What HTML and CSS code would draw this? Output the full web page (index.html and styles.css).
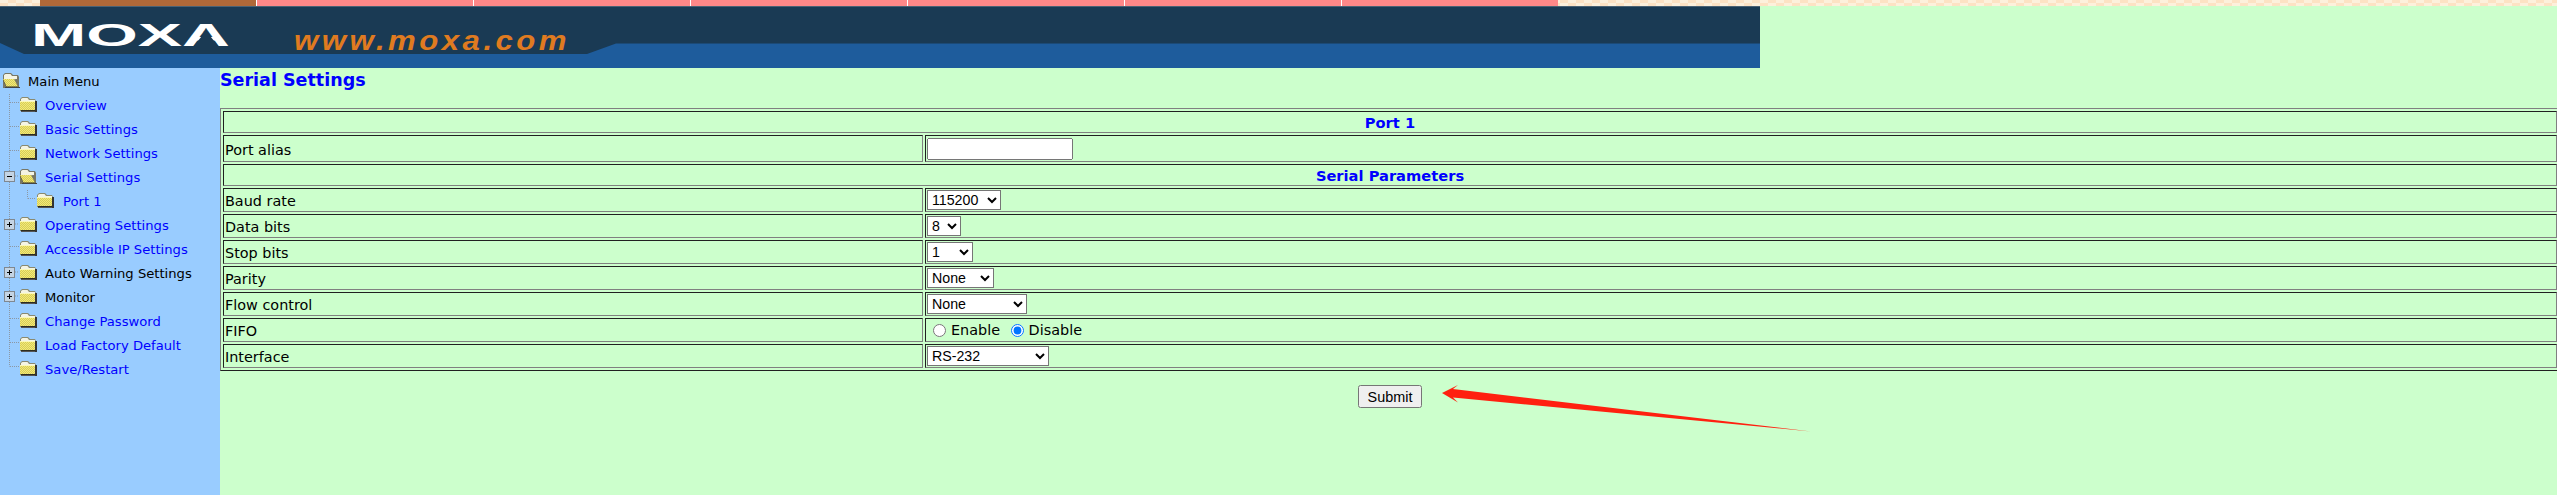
FILE: index.html
```html
<!DOCTYPE html>
<html lang="en">
<head>
<meta charset="utf-8">
<title>Serial Settings</title>
<link rel="stylesheet" href="styles.css">
</head>
<body>
<svg class="defs" width="0" height="0" aria-hidden="true">
  <defs>
    <pattern id="dither" width="2" height="2" patternUnits="userSpaceOnUse">
      <rect width="2" height="2" fill="#f2ea78"/>
      <rect width="1" height="1" fill="#d8cc58"/>
      <rect x="1" y="1" width="1" height="1" fill="#d8cc58"/>
    </pattern>
    <symbol id="closed" viewBox="0 0 18 24">
      <path d="M1 7V5l2-2h6l2 2h5l1 2v10H1z" fill="#8a8a70"/>
      <path d="M2 7V5l1.500-1h5L10 6h6v1z" fill="#f4f4e4"/>
      <rect x="2" y="7" width="15" height="10" fill="#2c2c20"/>
      <rect x="1" y="7" width="15" height="9" fill="url(#dither)"/>
      <rect x="1" y="7" width="15" height="1" fill="#fbf8b8"/>
      <rect x="2" y="17" width="16" height="1" fill="#555"/>
      <rect x="16" y="7" width="2" height="11" fill="#333"/>
    </symbol>
    <symbol id="open" viewBox="0 0 18 24">
      <path d="M1 7V5l2-2h6l2 2h5l1 2v11H1z" fill="#777766"/>
      <path d="M2 10V5l1.500-1h5L10 6h5v3z" fill="#f4f4e4"/>
      <path d="M1 10h11l5 8H5z" fill="#2c2c20"/>
      <path d="M1 9h11l4 7.500H4.500z" fill="url(#dither)"/>
      <rect x="3" y="17" width="15" height="1" fill="#444"/>
    </symbol>
    <symbol id="tee" viewBox="0 0 19 24">
      <path d="M9.500 0v24M10 8.500h9" class="dots"/>
    </symbol>
    <symbol id="end" viewBox="0 0 19 24">
      <path d="M9.500 0v8.500M10 8.500h9" class="dots"/>
    </symbol>
    <symbol id="minus" viewBox="0 0 19 24">
      <path d="M9.500 0v24M15 10h4" class="dots"/>
      <rect x="4.500" y="5.500" width="10" height="10" fill="#c4d4e4" stroke="#808890"/>
      <path d="M7 10.500h5" stroke="#000"/>
    </symbol>
    <symbol id="plus" viewBox="0 0 19 24">
      <path d="M9.500 0v24M15 10h4" class="dots"/>
      <rect x="4.500" y="5.500" width="10" height="10" fill="#c4d4e4" stroke="#808890"/>
      <path d="M7 10.500h5M9.500 8v5" stroke="#000"/>
    </symbol>
    <symbol id="sub" viewBox="0 0 36 24">
      <path d="M9.500 0v24M27.500 0v8.500M28 8.500h8" class="dots"/>
    </symbol>
  </defs>
</svg>

<div class="tabs">
  <div class="tab tab-active"></div>
  <div class="tab"></div>
  <div class="tab"></div>
  <div class="tab"></div>
  <div class="tab"></div>
  <div class="tab"></div>
  <div class="tab"></div>
</div>

<header class="banner">
  <svg class="banner-art" width="1760" height="62" viewBox="0 0 1760 62" role="img" aria-label="MOXA www.moxa.com">
    <path d="M0 0H1760V37.500H616L587 48H24L0 37z" fill="#1a3a54"/>
    <rect width="1760" height="1" fill="#4a6274"/>
    <rect y="37" x="616" width="1144" height="1" fill="#1c4a76"/>
    <text x="31" y="40" class="logo" textLength="199" lengthAdjust="spacingAndGlyphs">MOXA</text>
    <path d="M193 41L206 25L219 41z" fill="#1a3a54"/>
    <text x="294" y="44" class="url" textLength="276" lengthAdjust="spacingAndGlyphs">www.moxa.com</text>
  </svg>
</header>

<div class="main">
  <nav class="side">
    <div class="row"><svg class="ico-main"><use href="#open"/></svg><span class="label main-label">Main Menu</span></div>
    <a class="row" href="#"><svg class="twig"><use href="#tee"/></svg><svg class="ico"><use href="#closed"/></svg><span class="label">Overview</span></a>
    <a class="row" href="#"><svg class="twig"><use href="#tee"/></svg><svg class="ico"><use href="#closed"/></svg><span class="label">Basic Settings</span></a>
    <a class="row" href="#"><svg class="twig"><use href="#tee"/></svg><svg class="ico"><use href="#closed"/></svg><span class="label">Network Settings</span></a>
    <a class="row" href="#"><svg class="twig"><use href="#minus"/></svg><svg class="ico"><use href="#open"/></svg><span class="label">Serial Settings</span></a>
    <a class="row" href="#"><svg class="twig-sub"><use href="#sub"/></svg><svg class="ico"><use href="#closed"/></svg><span class="label label-sub">Port 1</span></a>
    <a class="row" href="#"><svg class="twig"><use href="#plus"/></svg><svg class="ico"><use href="#closed"/></svg><span class="label">Operating Settings</span></a>
    <a class="row" href="#"><svg class="twig"><use href="#tee"/></svg><svg class="ico"><use href="#closed"/></svg><span class="label">Accessible IP Settings</span></a>
    <div class="row"><svg class="twig"><use href="#plus"/></svg><svg class="ico"><use href="#closed"/></svg><span class="label dark">Auto Warning Settings</span></div>
    <div class="row"><svg class="twig"><use href="#plus"/></svg><svg class="ico"><use href="#closed"/></svg><span class="label dark">Monitor</span></div>
    <a class="row" href="#"><svg class="twig"><use href="#tee"/></svg><svg class="ico"><use href="#closed"/></svg><span class="label">Change Password</span></a>
    <a class="row" href="#"><svg class="twig"><use href="#tee"/></svg><svg class="ico"><use href="#closed"/></svg><span class="label">Load Factory Default</span></a>
    <a class="row" href="#"><svg class="twig"><use href="#end"/></svg><svg class="ico"><use href="#closed"/></svg><span class="label">Save/Restart</span></a>
  </nav>

  <main class="content">
    <h2 class="title">Serial Settings</h2>
    <form class="form">
      <table class="grid">
        <colgroup><col class="col-a"><col></colgroup>
        <tr class="head"><th colspan="2">Port 1</th></tr>
        <tr class="tall"><td>Port alias</td><td><input class="alias" type="text"></td></tr>
        <tr class="head"><th colspan="2">Serial Parameters</th></tr>
        <tr><td>Baud rate</td><td><select class="s-baud"><option>115200</option></select></td></tr>
        <tr><td>Data bits</td><td><select class="s-data"><option>8</option></select></td></tr>
        <tr><td>Stop bits</td><td><select class="s-stop"><option>1</option></select></td></tr>
        <tr><td>Parity</td><td><select class="s-parity"><option>None</option></select></td></tr>
        <tr><td>Flow control</td><td><select class="s-flow"><option>None</option></select></td></tr>
        <tr><td>FIFO</td><td class="radios">
          <label class="radio"><input type="radio" name="fifo">Enable</label>
          <label class="radio"><input type="radio" name="fifo" checked>Disable</label>
        </td></tr>
        <tr><td>Interface</td><td><select class="s-if"><option>RS-232</option></select></td></tr>
      </table>
      <div class="actions"><button class="submit" type="button">Submit</button></div>
    </form>
  </main>
</div>

<svg class="arrow" width="372" height="50" viewBox="1442 384 372 50" aria-hidden="true">
  <path d="M1442 393L1458 385L1453 389L1811 431.500L1453 397.500L1458 402.500z" fill="#ff2010"/>
</svg>
</body>
</html>
```

FILE: styles.css
```css
html, body {
  margin: 0;
  height: 495px;
  overflow: hidden;
  background: #ccffcc;
}

body {
  position: relative;
  font-family: "DejaVu Sans", Verdana, sans-serif;
  font-size: 13.15px;
  color: #000;
}

.defs {
  position: absolute;
}

.dots {
  fill: none;
  stroke: #8c97a3;
  stroke-dasharray: 1 1;
}

.tabs {
  display: flex;
  height: 6px;
  padding-left: 40px;
  background: repeating-conic-gradient(#fde2c4 0 25%, #fdf0dc 0 50%) 0 0 / 16px 6px;
}

.tab {
  width: 216px;
  background: #ff8888;
  border-right: 1px solid #fff;
}

.tab:last-child {
  border-right: 0;
}

.tab-active {
  background: #b06838;
}

.banner {
  width: 1760px;
  height: 62px;
  background: #1e5c9c;
}

.banner-art {
  display: block;
}

.logo {
  font-family: "Liberation Sans", Arial, sans-serif;
  font-weight: 700;
  font-size: 32px;
  fill: #fff;
}

.url {
  font-family: "Liberation Sans", Arial, sans-serif;
  font-style: italic;
  font-weight: 700;
  font-size: 27px;
  letter-spacing: 3px;
  fill: #e07b20;
}

.main {
  display: flex;
  height: 427px;
}

.side {
  flex: none;
  box-sizing: border-box;
  width: 220px;
  padding-top: 2px;
  background: #99ccff;
}

.row {
  display: flex;
  height: 24px;
  align-items: center;
  color: #0000ff;
  text-decoration: none;
}

.twig {
  flex: none;
  width: 19px;
  height: 24px;
}

.twig-sub {
  flex: none;
  width: 36px;
  height: 24px;
}

.ico {
  flex: none;
  width: 18px;
  height: 24px;
}

.ico-main {
  flex: none;
  width: 18px;
  height: 24px;
  margin-left: 2px;
}

.label {
  margin-left: 8px;
  white-space: nowrap;
  line-height: 24px;
}

.label-sub {
  margin-left: 9px;
}

.main-label {
  margin-left: 8px;
  color: #000;
}

.dark {
  color: #000;
}

.content {
  flex: 1;
  min-width: 0;
  overflow: hidden;
}

.title {
  margin: 0;
  height: 40px;
  font-size: 17.5px;
  line-height: 25px;
  color: #0000ff;
}

.form {
  width: 2340px;
}

.grid {
  box-sizing: border-box;
  width: 2340px;
  table-layout: fixed;
  border-collapse: separate;
  border-spacing: 2px;
  border: 1px solid;
  border-color: #808080 #202020 #202020 #808080;
}

.col-a {
  width: 700px;
}

.grid td,
.grid th {
  box-sizing: border-box;
  height: 24px;
  padding: 1px;
  border: 1px solid;
  border-color: #202020 #808080 #808080 #202020;
  text-align: left;
  font-weight: 400;
  font-size: 14.4px;
  line-height: 18px;
}

.grid th,
.grid td:first-child,
.grid .radios {
  padding: 2px 1px 0;
}

.grid .head th {
  height: 22px;
  text-align: center;
  font-weight: 700;
  font-size: 14.67px;
  color: #0000ff;
}

.grid .tall td {
  height: 27px;
}

.alias {
  display: block;
  box-sizing: border-box;
  width: 146px;
  height: 22px;
  margin: 0;
}

select {
  display: block;
  box-sizing: border-box;
  height: 20px;
  margin: 0;
  font-family: "Liberation Sans", Arial, sans-serif;
  font-size: 14.2px;
  background: #fff;
}

.s-baud { width: 74px; }
.s-data { width: 34px; }
.s-stop { width: 46px; }
.s-parity { width: 67px; }
.s-flow { width: 100px; }
.s-if { width: 122px; }

.radio {
  display: inline-flex;
  align-items: center;
}

.radio input {
  margin: 0 5px 0 6px;
}

.actions {
  display: flex;
  justify-content: center;
  margin-top: 14px;
}

.submit {
  box-sizing: border-box;
  width: 64px;
  height: 23px;
  padding: 0;
  font-family: "Liberation Sans", Arial, sans-serif;
  font-size: 14.4px;
}

.arrow {
  position: absolute;
  left: 1442px;
  top: 384px;
}
```
